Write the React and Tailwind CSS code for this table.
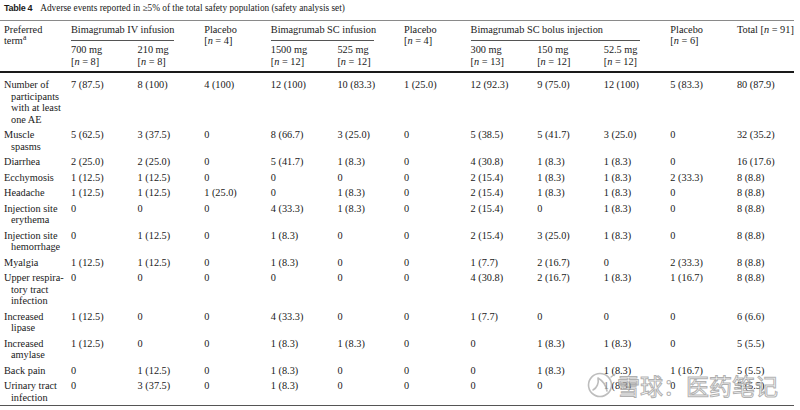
import React from "react";

const COLS = "grid grid-cols-[67px_repeat(10,66.6px)_56px]";

const N = ({ v }) => (
  <>
    [<i>n</i> = {v}]
  </>
);

const rows = [
  [["Number of", "participants", "with at least", "one AE"], ["7 (87.5)", "8 (100)", "4 (100)", "12 (100)", "10 (83.3)", "1 (25.0)", "12 (92.3)", "9 (75.0)", "12 (100)", "5 (83.3)", "80 (87.9)"]],
  [["Muscle", "spasms"], ["5 (62.5)", "3 (37.5)", "0", "8 (66.7)", "3 (25.0)", "0", "5 (38.5)", "5 (41.7)", "3 (25.0)", "0", "32 (35.2)"]],
  [["Diarrhea"], ["2 (25.0)", "2 (25.0)", "0", "5 (41.7)", "1 (8.3)", "0", "4 (30.8)", "1 (8.3)", "1 (8.3)", "0", "16 (17.6)"]],
  [["Ecchymosis"], ["1 (12.5)", "1 (12.5)", "0", "0", "0", "0", "2 (15.4)", "1 (8.3)", "1 (8.3)", "2 (33.3)", "8 (8.8)"]],
  [["Headache"], ["1 (12.5)", "1 (12.5)", "1 (25.0)", "0", "1 (8.3)", "0", "2 (15.4)", "1 (8.3)", "1 (8.3)", "0", "8 (8.8)"]],
  [["Injection site", "erythema"], ["0", "0", "0", "4 (33.3)", "1 (8.3)", "0", "2 (15.4)", "0", "1 (8.3)", "0", "8 (8.8)"]],
  [["Injection site", "hemorrhage"], ["0", "1 (12.5)", "0", "1 (8.3)", "0", "0", "2 (15.4)", "3 (25.0)", "1 (8.3)", "0", "8 (8.8)"]],
  [["Myalgia"], ["1 (12.5)", "1 (12.5)", "0", "1 (8.3)", "0", "0", "1 (7.7)", "2 (16.7)", "0", "2 (33.3)", "8 (8.8)"]],
  [["Upper respira-", "tory tract", "infection"], ["0", "0", "0", "0", "0", "0", "4 (30.8)", "2 (16.7)", "1 (8.3)", "1 (16.7)", "8 (8.8)"]],
  [["Increased", "lipase"], ["1 (12.5)", "0", "0", "4 (33.3)", "0", "0", "1 (7.7)", "0", "0", "0", "6 (6.6)"]],
  [["Increased", "amylase"], ["1 (12.5)", "0", "0", "1 (8.3)", "1 (8.3)", "0", "0", "1 (8.3)", "1 (8.3)", "0", "5 (5.5)"]],
  [["Back pain"], ["0", "1 (12.5)", "0", "1 (8.3)", "0", "0", "0", "1 (8.3)", "1 (8.3)", "1 (16.7)", "5 (5.5)"]],
  [["Urinary tract", "infection"], ["0", "3 (37.5)", "0", "1 (8.3)", "0", "0", "0", "0", "1 (8.3)", "0", "5 (5.5)"]],
];

export default function App() {
  return (
    <div className="relative w-[800px] h-[410px] bg-white overflow-hidden font-['Liberation_Serif',serif] text-[10.3px] leading-[11.5px] text-[#1a1a1a]">
      <div className="w-[794px]">
        {/* Title */}
        <div className="h-[21px] pt-[3px] pl-[4px] flex items-baseline border-b border-[#8a8a8a] whitespace-nowrap">
          <span className="font-['Liberation_Sans',sans-serif] font-bold text-[9px] tracking-[-0.3px]">Table 4</span>
          <span className="ml-[8px] text-[9.3px]">Adverse events reported in ≥5% of the total safety population (safety analysis set)</span>
        </div>

        {/* Header */}
        <div className="pt-[2.5px] pb-[4px] pl-[4px] border-b-2 border-[#1a1a1a] whitespace-nowrap">
          <div className={COLS}>
            <div className="row-span-2">
              Preferred
              <br />
              term<sup>a</sup>
            </div>
            <div className="col-span-2 mr-[30px] pb-[5px] border-b border-[#555]">Bimagrumab IV infusion</div>
            <div className="row-span-2">
              Placebo
              <br />
              <N v="4" />
            </div>
            <div className="col-span-2 mr-[30px] pb-[5px] border-b border-[#555]">Bimagrumab SC infusion</div>
            <div className="row-span-2">
              Placebo
              <br />
              <N v="4" />
            </div>
            <div className="col-span-3 mr-[30px] pb-[5px] border-b border-[#555]">Bimagrumab SC bolus injection</div>
            <div className="row-span-2">
              Placebo
              <br />
              <N v="6" />
            </div>
            <div className="row-span-2">
              Total <N v="91" />
            </div>

            <div className="pt-[3px]">700 mg<br /><N v="8" /></div>
            <div className="pt-[3px]">210 mg<br /><N v="8" /></div>
            <div className="pt-[3px]">1500 mg<br /><N v="12" /></div>
            <div className="pt-[3px]">525 mg<br /><N v="12" /></div>
            <div className="pt-[3px]">300 mg<br /><N v="13" /></div>
            <div className="pt-[3px]">150 mg<br /><N v="12" /></div>
            <div className="pt-[3px]">52.5 mg<br /><N v="12" /></div>
          </div>
        </div>

        {/* Body */}
        <div className="pt-[6px] pb-[2px] pl-[4px] border-b border-[#555] whitespace-nowrap">
          <div className={`${COLS} gap-y-[4px]`}>
            {rows.map(([label, vals], i) => (
              <React.Fragment key={i}>
                <div className="pl-[7px] -indent-[7px]">
                  {label.map((l, j) => (
                    <React.Fragment key={j}>
                      {j > 0 && <br />}
                      {l}
                    </React.Fragment>
                  ))}
                </div>
                {vals.map((v, k) => (
                  <div key={k}>{v}</div>
                ))}
              </React.Fragment>
            ))}
          </div>
        </div>
      </div>

      {/* Watermark */}
      <div className="absolute left-[586px] top-[371px] flex items-center pointer-events-none">
        <svg width="30" height="28" viewBox="0 0 30 28" className="opacity-75">
          <circle cx="14" cy="14" r="11.5" fill="rgba(255,255,255,0.6)" stroke="#a8a8a8" strokeWidth="1.6" />
          <path d="M7 19 C 11 17, 13 12, 12 7 M12 7 C 17 10, 20 14, 21 20" fill="none" stroke="#a8a8a8" strokeWidth="1.6" strokeLinecap="round" />
          <path d="M25 6 L 29 3" stroke="#a8a8a8" strokeWidth="1.4" strokeLinecap="round" />
        </svg>
        <span className="ml-[1px] font-['Noto_Sans_CJK_SC',sans-serif] text-[23px] leading-[23px] text-[rgba(255,255,255,0.55)] [-webkit-text-stroke:1px_rgba(150,150,150,0.75)]">
          雪球：医药笔记
        </span>
      </div>
    </div>
  );
}
